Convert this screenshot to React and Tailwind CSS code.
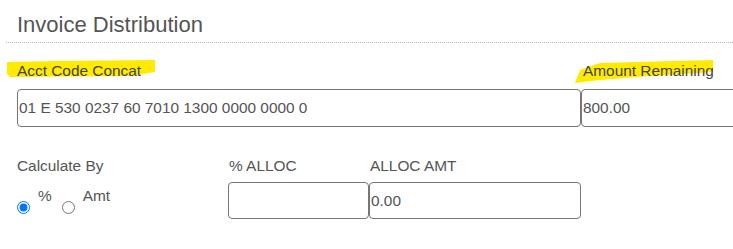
import React from 'react';

const font = { fontFamily: '"Liberation Sans", Arial, sans-serif' };

function Highlight({ className, points, w, h }) {
  return (
    <svg className={className} width={w} height={h} viewBox={`0 0 ${w} ${h}`}>
      <polygon points={points} fill="#ffea00" />
    </svg>
  );
}

function Field({ value, className }) {
  return (
    <input
      type="text"
      readOnly
      defaultValue={value}
      className={`block border border-[#767676] rounded-[4px] pl-[1px] pr-1 text-[15.4px] text-[#555] bg-white outline-none ${className}`}
    />
  );
}

export default function App() {
  return (
    <div className="w-[733px] h-[249px] overflow-hidden bg-white pl-[6px] text-[#555]" style={font}>
      <div className="border-b border-dotted border-[#bbb] pl-[11px] pt-[12px] pb-[4px]">
        <h2 className="text-[22px] leading-[26px] text-[#555]">Invoice Distribution</h2>
      </div>

      <div className="pl-[11px] pt-[19px]">
        <div className="flex">
          <div className="w-[564px] shrink-0">
            <div className="relative mb-[9px] text-[15.4px] leading-[18px]">
              <Highlight className="absolute left-[-10px] top-[-2px]" w={150} h={18} points="0,2 53,1 148,0 148,12 123,16 3,17 0,14" />
              <span className="relative text-[#444]">Acct Code Concat</span>
            </div>
            <Field value="01 E 530 0237 60 7010 1300 0000 0000 0" className="w-[564px] h-[38px]" />
          </div>
          <div className="w-[200px] shrink-0">
            <div className="relative mb-[9px] ml-[2px] text-[15.4px] leading-[18px]">
              <Highlight className="absolute left-[-8px] top-[-2px]" w={140} h={24} points="0,23 5,10 25,3 138,0 138,12 75,16 25,20" />
              <span className="relative text-[#444]">Amount Remaining</span>
            </div>
            <Field value="800.00" className="w-[200px] h-[38px]" />
          </div>
        </div>

        <div className="flex items-start mt-[30px]">
          <div className="w-[211px] shrink-0">
            <div className="text-[15.4px] leading-[18px]">Calculate By</div>
            <div className="flex items-start mt-[12px] text-[15.4px] leading-[18px]">
              <label className="flex items-start">
                <input type="radio" name="calcby" defaultChecked className="m-0 mt-[14px] w-[13px] h-[13px]" />
                <span className="ml-[8px]">%</span>
              </label>
              <label className="flex items-start ml-[10px]">
                <input type="radio" name="calcby" className="m-0 mt-[14px] w-[13px] h-[13px]" />
                <span className="ml-[8px]">Amt</span>
              </label>
            </div>
          </div>
          <div className="w-[141px] shrink-0">
            <div className="mb-[7px] ml-[1px] text-[15.4px] leading-[18px]">% ALLOC</div>
            <Field value="" className="w-[141px] h-[37px]" />
          </div>
          <div className="w-[212px] shrink-0">
            <div className="mb-[7px] ml-[1px] text-[15.4px] leading-[18px]">ALLOC AMT</div>
            <Field value="0.00" className="w-[212px] h-[37px]" />
          </div>
        </div>
      </div>
    </div>
  );
}
